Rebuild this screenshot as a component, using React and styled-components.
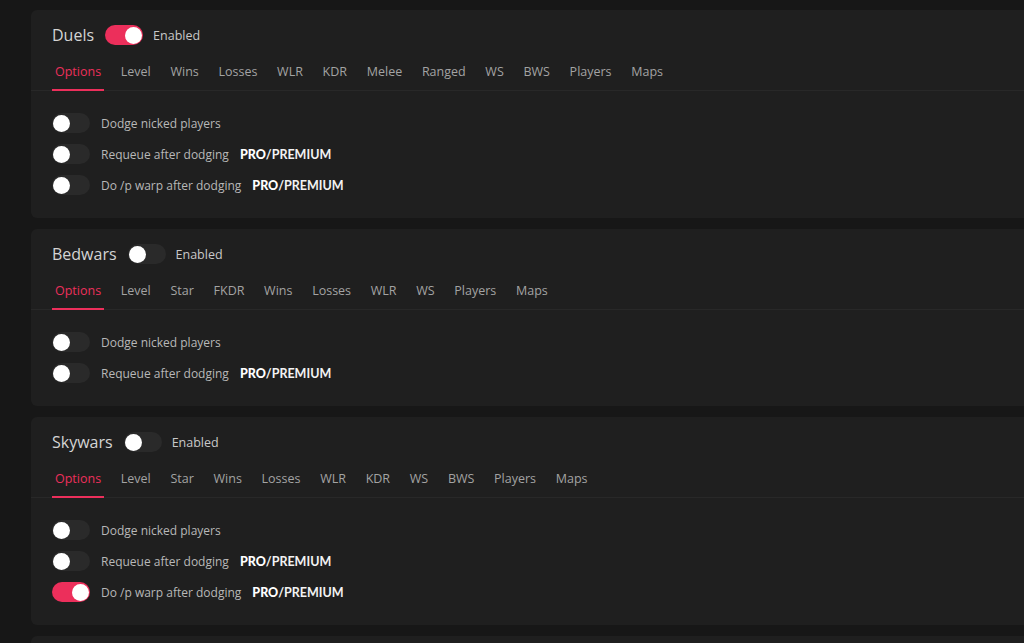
import React from "react";
import styled, { createGlobalStyle } from "styled-components";

const Global = createGlobalStyle`
  html, body { margin: 0; padding: 0; background: #171717; overflow: hidden; }
  body { font-family: "Open Sans", "Noto Sans", sans-serif; }
`;

const Page = styled.div`
  padding: 10px 0 0 31px;
  display: flex;
  flex-direction: column;
  gap: 11px;
  width: 1024px;
  box-sizing: border-box;
`;

const Card = styled.section`
  background: #1f1f1f;
  border-radius: 6px;
  width: calc(100% + 20px);
  min-height: ${(p) => (p.$stub ? "40px" : "0")};
  padding: 15px 0 23px 0;
  box-sizing: border-box;
`;

const Header = styled.div`
  display: flex;
  align-items: center;
  gap: 11px;
  padding: 0 21px;
  height: 20px;
`;

const Title = styled.h2`
  margin: 0;
  font-size: 16px;
  font-weight: 400;
  color: #d4d4d4;
`;

const HeaderLabel = styled.span`
  font-size: 12.5px;
  color: #c8c8c8;
  margin-left: -1px;
`;

const Track = styled.button`
  position: relative;
  width: 38px;
  height: 20px;
  border-radius: 10px;
  border: none;
  padding: 0;
  flex: none;
  background: ${(p) => (p.$on ? "#ec2f5b" : "#2a2a2a")};
  cursor: pointer;
`;

const Knob = styled.span`
  position: absolute;
  top: 2px;
  left: ${(p) => (p.$on ? "20px" : "1px")};
  width: 17px;
  height: 17px;
  border-radius: 50%;
  background: #ffffff;
`;

const Toggle = ({ on }) => (
  <Track $on={on} aria-pressed={on}>
    <Knob $on={on} />
  </Track>
);

const Tabs = styled.nav`
  display: flex;
  gap: 13.7px;
  padding: 0 21px;
  margin-top: 8px;
  border-bottom: 1px solid #282828;
`;

const Tab = styled.div`
  font-size: 12.5px;
  line-height: 18px;
  padding: 10px 3px 8px;
  color: ${(p) => (p.$active ? "#ec2f5b" : "#a3a3a3")};
  border-bottom: 2px solid ${(p) => (p.$active ? "#ec2f5b" : "transparent")};
  margin-bottom: -1px;
`;

const Options = styled.div`
  display: flex;
  flex-direction: column;
  gap: 11px;
  padding: 22px 21px 0;
`;

const Row = styled.div`
  display: flex;
  align-items: center;
  gap: 11px;
`;

const Label = styled.span`
  font-size: 12px;
  color: #b8b8b8;
`;

const Badge = styled.span`
  font-family: "Lato", "Open Sans", sans-serif;
  font-size: 12.5px;
  color: #f2f2f2;
  font-weight: 700;
  b { font-weight: 900; color: #ffffff; }
`;

const sections = [
  {
    title: "Duels",
    on: true,
    tabs: ["Options", "Level", "Wins", "Losses", "WLR", "KDR", "Melee", "Ranged", "WS", "BWS", "Players", "Maps"],
    options: [
      { label: "Dodge nicked players", on: false },
      { label: "Requeue after dodging", on: false, pro: true },
      { label: "Do /p warp after dodging", on: false, pro: true },
    ],
  },
  {
    title: "Bedwars",
    on: false,
    tabs: ["Options", "Level", "Star", "FKDR", "Wins", "Losses", "WLR", "WS", "Players", "Maps"],
    options: [
      { label: "Dodge nicked players", on: false },
      { label: "Requeue after dodging", on: false, pro: true },
    ],
  },
  {
    title: "Skywars",
    on: false,
    tabs: ["Options", "Level", "Star", "Wins", "Losses", "WLR", "KDR", "WS", "BWS", "Players", "Maps"],
    options: [
      { label: "Dodge nicked players", on: false },
      { label: "Requeue after dodging", on: false, pro: true },
      { label: "Do /p warp after dodging", on: true, pro: true },
    ],
  },
];

export default function App() {
  return (
    <>
      <Global />
      <Page>
        {sections.map((s) => (
          <Card key={s.title}>
            <Header>
              <Title>{s.title}</Title>
              <Toggle on={s.on} />
              <HeaderLabel>Enabled</HeaderLabel>
            </Header>
            <Tabs>
              {s.tabs.map((t, i) => (
                <Tab key={t} $active={i === 0}>{t}</Tab>
              ))}
            </Tabs>
            <Options>
              {s.options.map((o) => (
                <Row key={o.label}>
                  <Toggle on={o.on} />
                  <Label>{o.label}</Label>
                  {o.pro && (
                    <Badge>
                      <b>PRO</b>/PREMIUM
                    </Badge>
                  )}
                </Row>
              ))}
            </Options>
          </Card>
        ))}
        <Card $stub aria-hidden="true" />
      </Page>
    </>
  );
}
